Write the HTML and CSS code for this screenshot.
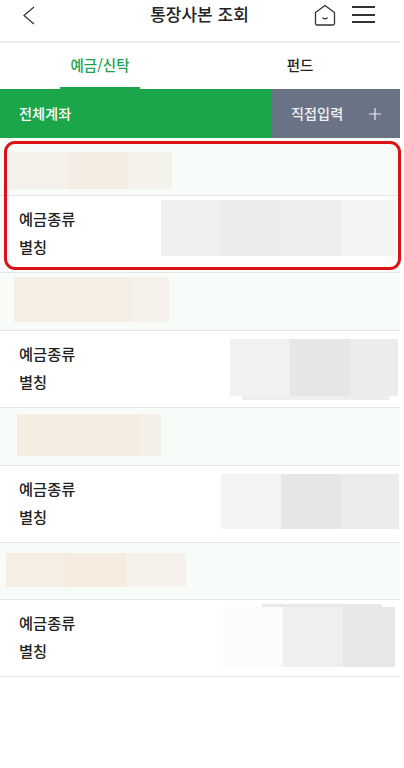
FILE: index.html
```html
<!DOCTYPE html>
<html lang="ko">
<head>
<meta charset="utf-8">
<title>통장사본 조회</title>
<link rel="stylesheet" href="styles.css">
</head>
<body>
<div class="app">
  <header class="topbar">
    <svg class="back" viewBox="0 0 14 24" width="14" height="24"><path d="M11 4 1 12.500 11 21" fill="none" stroke="#333" stroke-width="1.200"/></svg>
    <h1 class="title">통장사본 조회</h1>
    <svg class="home" viewBox="0 0 24 24" width="24" height="24"><path d="M2.500 9.500 12 2.500l9.500 7v11a1.500 1.500 0 0 1-1.500 1.500H4a1.500 1.500 0 0 1-1.500-1.500z" fill="none" stroke="#333" stroke-width="1.300" stroke-linejoin="round"/><path d="M9.500 14.500c1 1.700 4 1.700 5 0" fill="none" stroke="#333" stroke-width="1.400"/></svg>
    <div class="menu"><span></span><span></span><span></span></div>
  </header>
  <nav class="tabs">
    <div class="tab active">예금/신탁</div>
    <div class="tab">펀드</div>
  </nav>
  <div class="actions">
    <div class="all">전체계좌</div>
    <div class="direct"><span>직접입력</span><svg viewBox="0 0 14 14" width="14" height="14"><path d="M7 1v12M1 7h12" stroke="#e8eaee" stroke-width="1.200"/></svg></div>
  </div>
  <main class="list">
    <section class="account">
      <div class="head"><div class="mask m1"><i class="a"></i><i class="b"></i><i class="c"></i></div></div>
      <div class="detail"><p>예금종류</p><p>별칭</p><div class="mask d1"><i class="g1"></i><i class="g2"></i><i class="g3"></i><i class="g4"></i></div></div>
      <div class="highlight"></div>
    </section>
    <section class="account">
      <div class="head"><div class="mask m2"><i class="a2"></i><i class="c"></i></div></div>
      <div class="detail"><p>예금종류</p><p>별칭</p><div class="strip s2"></div><div class="mask d2"><i class="g5"></i><i class="g6"></i><i class="g7"></i></div></div>
    </section>
    <section class="account">
      <div class="head"><div class="mask m3"><i class="a3"></i><i class="c3"></i></div></div>
      <div class="detail"><p>예금종류</p><p>별칭</p><div class="mask d3"><i class="g8"></i><i class="g6"></i><i class="g7"></i></div></div>
    </section>
    <section class="account">
      <div class="head"><div class="mask m4"><i class="a4"></i><i class="b4"></i><i class="c"></i></div></div>
      <div class="detail"><p>예금종류</p><p>별칭</p><div class="strip s4"></div><div class="mask d4"><i class="g9"></i><i class="g10"></i><i class="g11"></i></div></div>
    </section>
  </main>
</div>
</body>
</html>
```
FILE: styles.css
```css
* { box-sizing: border-box; }
html, body { margin: 0; background: #fff; }
body { font-family: "Noto Sans CJK KR", "Noto Sans", sans-serif; color: #222; }
.app { width: 400px; min-height: 768px; background: #fff; }

.topbar { position: relative; height: 43px; border-bottom: 2px solid #eeeeee; display: flex; align-items: center; justify-content: center; }
.title { margin: 0 0 13px -1px; font-size: 17px; font-weight: 500; line-height: 30px; }
.back { position: absolute; left: 23px; top: 3px; }
.home { position: absolute; left: 313px; top: 3px; }
.menu { position: absolute; left: 352px; top: 6px; width: 23px; height: 17px; display: flex; flex-direction: column; justify-content: space-between; }
.menu span { display: block; height: 2px; background: #333; }

.tabs { display: flex; height: 46px; }
.tab { flex: 0 0 200px; position: relative; text-align: center; font-size: 14.500px; font-weight: 500; line-height: 43px; }
.tab.active { color: #1fa24e; }
.tab.active::after { content: ""; position: absolute; left: 60px; top: 44px; width: 80px; height: 2px; background: #1ba64a; }

.actions { display: flex; height: 49px; font-size: 14.200px; font-weight: 500; line-height: 49px; color: #fff; }
.all { width: 272px; background: #1ba64a; padding-left: 19px; }
.direct { width: 128px; background: #6a7385; padding: 0 18px 0 19px; display: flex; justify-content: space-between; align-items: center; color: #eef0f3; }

.account { position: relative; }
.head { position: relative; height: 58px; background: #f8fcf9; border-bottom: 1px solid #e3e6e4; }
.detail { position: relative; height: 77px; padding: 8px 0 0 19px; border-bottom: 1px solid #e3e6e4; font-size: 15.300px; font-weight: 500; }
.detail p { margin: 0; line-height: 28px; }
.account:last-child .head { height: 57px; }

.mask, .strip { position: absolute; }
.mask { display: flex; }
.mask i { display: block; height: 100%; }
.highlight { position: absolute; left: 4px; top: 3px; width: 397px; height: 129px; border: 3px solid #dc1216; border-radius: 11px; }

.m1 { left: 9px; top: 14px; width: 163px; height: 37px; }
.m2 { left: 14px; top: 4px; width: 155px; height: 45px; }
.m3 { left: 17px; top: 6px; width: 144px; height: 42px; }
.m4 { left: 6px; top: 10px; width: 180px; height: 34px; }
.a { width: 59px; background: #f5f0ea; }
.b { width: 60px; background: #f5ede3; }
.c { flex: 1; background: #f5f2ec; }
.a2 { width: 120px; background: #f4eee4; }
.a3 { width: 122px; background: #f4ede2; }
.c3 { flex: 1; background: #f5f0e7; }
.a4 { width: 60px; background: #f6eee5; }
.b4 { width: 60px; background: #f5ebdf; }

.d1 { left: 161px; top: 4px; width: 235px; height: 56px; }
.d2 { left: 230px; top: 8px; width: 168px; height: 57px; }
.d3 { left: 221px; top: 8px; width: 178px; height: 55px; }
.d4 { left: 223px; top: 7px; width: 172px; height: 60px; }
.g1 { width: 60px; background: #efefef; }
.g2 { width: 60px; background: #ececec; }
.g3 { width: 60px; background: #eeeeee; }
.g4 { flex: 1; background: #f3f3f3; }
.g5 { width: 60px; background: #f1f1f1; }
.g6 { width: 60px; background: #e6e6e6; }
.g7 { flex: 1; background: #ececec; }
.g8 { width: 60px; background: #f4f4f4; }
.g9 { width: 60px; background: #fbfbfb; }
.g10 { width: 60px; background: #efefef; }
.g11 { flex: 1; background: #e7e7e7; }
.s2 { left: 242px; top: 60px; width: 147px; height: 9px; background: #eeeeee; }
.s4 { left: 262px; top: 4px; width: 120px; height: 4px; background: #e9e9e9; }
```
